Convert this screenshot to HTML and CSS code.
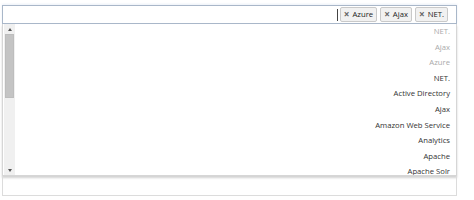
FILE: index.html
```html
<!DOCTYPE html>
<html lang="en">
<head>
  <meta charset="UTF-8">
  <title>Tag select</title>
  <link rel="stylesheet" href="styles.css">
</head>
<body>
  <div class="container">
    <div class="select">
      <span class="tag"><span class="remove">&times;</span>NET.</span>
      <span class="tag"><span class="remove">&times;</span>Ajax</span>
      <span class="tag"><span class="remove">&times;</span>Azure</span>
      <span class="caret"></span>
    </div>
    <div class="dropdown">
      <div class="scrollbar">
        <div class="arrow up"></div>
        <div class="track"><div class="thumb"></div></div>
        <div class="arrow down"></div>
      </div>
      <ul class="options">
        <li class="chosen">NET.</li>
        <li class="chosen">Ajax</li>
        <li class="chosen">Azure</li>
        <li>NET.</li>
        <li>Active Directory</li>
        <li>Ajax</li>
        <li>Amazon Web Service</li>
        <li>Analytics</li>
        <li>Apache</li>
        <li>Apache Solr</li>
      </ul>
    </div>
    <div class="next-field"></div>
  </div>
</body>
</html>
```

FILE: styles.css
```css
body {
  margin: 0;
  padding: 0;
  background-color: #fff;
  font-family: "Open Sans", "Liberation Sans", Arial, sans-serif;
  font-size: 7.7px;
  color: #333;
}

.container {
  width: 455px;
  padding: 5px 0 0 2px;
}

.select {
  height: 17px;
  border: 1px solid #a9b7c9;
  box-shadow: 0 -1px 2px rgba(120, 150, 200, 0.15);
  display: flex;
  flex-direction: row-reverse;
  align-items: center;
  gap: 3px;
  padding: 0 8px 0 0;
}

.tag {
  display: flex;
  align-items: center;
  height: 13px;
  padding: 0 3px;
  background-color: #f1f1f1;
  border: 1px solid #c9c9c9;
  border-radius: 2px;
  line-height: 13px;
  color: #222;
}

.remove {
  font-size: 10px;
  font-weight: bold;
  margin-right: 3px;
  color: #666;
}

.caret {
  width: 1px;
  height: 12px;
  margin-right: -1px;
  background-color: #444;
}

.dropdown {
  display: flex;
  height: 151px;
  border: 1px solid #d6d6d6;
  border-top: none;
  box-shadow: 0 2px 2px rgba(0, 0, 0, 0.18);
  overflow: hidden;
}

.scrollbar {
  width: 11px;
  margin-left: 1px;
  display: flex;
  flex-direction: column;
  background-color: #f0f0f0;
}

.arrow {
  height: 10px;
  display: flex;
  justify-content: center;
  align-items: center;
}

.arrow.up::before {
  content: "";
  border-left: 2.5px solid transparent;
  border-right: 2.5px solid transparent;
  border-bottom: 3px solid #555;
}

.arrow.down::before {
  content: "";
  border-left: 2.5px solid transparent;
  border-right: 2.5px solid transparent;
  border-top: 3px solid #555;
}

.track {
  flex: 1;
  padding: 0 1px;
}

.thumb {
  height: 62px;
  background-color: #c4c4c4;
  border: 1px solid #bdbdbd;
}

.options {
  flex: 1;
  list-style: none;
  margin: 0;
  padding: 0 6px 0 0;
  text-align: right;
}

.options li {
  height: 15.6px;
  line-height: 15px;
  white-space: nowrap;
  color: #333;
}

.options li.chosen {
  color: #aaa;
}

.next-field {
  height: 19px;
  border: 1px solid #dcdcdc;
  border-top: none;
}
```
